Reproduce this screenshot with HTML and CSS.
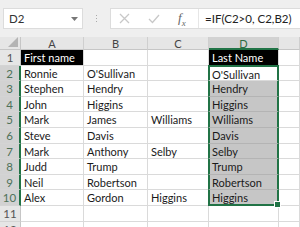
FILE: index.html
```html
<!DOCTYPE html>
<html lang="en">
<head>
    <meta charset="UTF-8">
    <title>Sheet</title>
    <link rel="stylesheet" href="styles.css">
</head>
<body>
    <div class="formula-bar">
        <div class="name-box">
            <span>D2</span>
            <svg class="caret" width="7" height="4" viewBox="0 0 7 4"><path d="M0 0h7L3.5 4z" fill="#777"/></svg>
        </div>
        <div class="grip"><i></i><i></i><i></i></div>
        <div class="fx-box">
            <div class="tools">
                <svg width="11" height="11" viewBox="0 0 11 11"><path d="M1 1l9 9M10 1l-9 9" stroke="#c8c8c8" stroke-width="1.3"/></svg>
                <svg width="12" height="11" viewBox="0 0 12 11"><path d="M1 6l3.5 3.5L11 2" stroke="#c8c8c8" stroke-width="1.3" fill="none"/></svg>
                <span class="fx">f<sub>x</sub></span>
            </div>
            <div class="formula">=IF(C2&gt;0, C2,B2)</div>
        </div>
    </div>

    <div class="sheet">
        <div class="corner"><svg width="10" height="10" viewBox="0 0 10 10"><path d="M10 0v10H0z" fill="#b4b4b4"/></svg></div>
        <div class="col-head">A</div>
        <div class="col-head">B</div>
        <div class="col-head">C</div>
        <div class="col-head sel">D</div>
        <div class="col-head"></div>

        <div class="row-head">1</div>
        <div class="cell title">First name</div>
        <div class="cell"></div>
        <div class="cell"></div>
        <div class="cell title">Last Name</div>
        <div class="cell"></div>

        <div class="row-head sel">2</div>
        <div class="cell">Ronnie</div>
        <div class="cell">O'Sullivan</div>
        <div class="cell"></div>
        <div class="cell pick active">O'Sullivan</div>
        <div class="cell"></div>

        <div class="row-head sel">3</div>
        <div class="cell">Stephen</div>
        <div class="cell">Hendry</div>
        <div class="cell"></div>
        <div class="cell pick">Hendry</div>
        <div class="cell"></div>

        <div class="row-head sel">4</div>
        <div class="cell">John</div>
        <div class="cell">Higgins</div>
        <div class="cell"></div>
        <div class="cell pick">Higgins</div>
        <div class="cell"></div>

        <div class="row-head sel">5</div>
        <div class="cell">Mark</div>
        <div class="cell">James</div>
        <div class="cell">Williams</div>
        <div class="cell pick">Williams</div>
        <div class="cell"></div>

        <div class="row-head sel">6</div>
        <div class="cell">Steve</div>
        <div class="cell">Davis</div>
        <div class="cell"></div>
        <div class="cell pick">Davis</div>
        <div class="cell"></div>

        <div class="row-head sel">7</div>
        <div class="cell">Mark</div>
        <div class="cell">Anthony</div>
        <div class="cell">Selby</div>
        <div class="cell pick">Selby</div>
        <div class="cell"></div>

        <div class="row-head sel">8</div>
        <div class="cell">Judd</div>
        <div class="cell">Trump</div>
        <div class="cell"></div>
        <div class="cell pick">Trump</div>
        <div class="cell"></div>

        <div class="row-head sel">9</div>
        <div class="cell">Neil</div>
        <div class="cell">Robertson</div>
        <div class="cell"></div>
        <div class="cell pick">Robertson</div>
        <div class="cell"></div>

        <div class="row-head sel">10</div>
        <div class="cell">Alex</div>
        <div class="cell">Gordon</div>
        <div class="cell">Higgins</div>
        <div class="cell pick last">Higgins<span class="handle"></span></div>
        <div class="cell"></div>

        <div class="row-head">11</div>
        <div class="cell"></div>
        <div class="cell"></div>
        <div class="cell"></div>
        <div class="cell"></div>
        <div class="cell"></div>

        <div class="row-head">12</div>
        <div class="cell"></div>
        <div class="cell"></div>
        <div class="cell"></div>
        <div class="cell"></div>
        <div class="cell"></div>
    </div>
</body>
</html>
```

FILE: styles.css
```css
body {
    margin: 0;
    background: #fff;
    font-family: Lato, "Liberation Sans", sans-serif;
    font-size: 11px;
    color: #1a1a1a;
    overflow: hidden;
}

.formula-bar {
    height: 37px;
    background: #efefef;
    display: flex;
    align-items: center;
    padding-left: 3px;
    box-sizing: border-box;
}

.name-box {
    width: 80px;
    height: 21px;
    box-sizing: border-box;
    background: #fff;
    border: 1px solid #dcdcdc;
    display: flex;
    align-items: center;
    justify-content: space-between;
    padding: 0 4px 0 5px;
    font-size: 11.5px;
    color: #333;
}

.grip {
    width: 27px;
    display: flex;
    flex-direction: column;
    align-items: center;
    gap: 2px;
}

.grip i {
    width: 1px;
    height: 1px;
    background: #aaa;
}

.fx-box {
    flex: 1;
    height: 21px;
    background: #fff;
    border-top: 1px solid #dcdcdc;
    border-bottom: 1px solid #dcdcdc;
    border-left: 1px solid #dcdcdc;
    box-sizing: border-box;
    display: flex;
    align-items: center;
}

.tools {
    width: 88px;
    display: flex;
    align-items: center;
    gap: 18px;
    padding-left: 8px;
    box-sizing: border-box;
    height: 100%;
    border-right: 1px solid #e6e6e6;
}

.fx {
    font-family: "Liberation Serif", serif;
    font-style: italic;
    font-size: 13px;
    color: #666;
}

.fx sub {
    font-size: 9px;
}

.formula {
    padding-left: 6px;
    font-size: 11.5px;
    color: #222;
}

.sheet {
    display: grid;
    grid-template-columns: 21px 63px 64px 61px 70px 1fr;
    grid-template-rows: 13px repeat(12, 15.6px);
}

.corner {
    background: #e6e6e6;
    border-right: 1px solid #c6c6c6;
    border-bottom: 1px solid #c6c6c6;
    display: flex;
    align-items: flex-end;
    justify-content: flex-end;
    padding: 0 2px 2px 0;
}

.col-head {
    background: #e6e6e6;
    border-right: 1px solid #cfcfcf;
    border-bottom: 1px solid #c6c6c6;
    text-align: center;
    line-height: 13px;
    color: #444;
}

.col-head.sel {
    background: #d2d2d2;
    color: #2e6b45;
    border-bottom: 2px solid #217346;
}

.row-head {
    background: #e6e6e6;
    border-right: 1px solid #c6c6c6;
    border-bottom: 1px solid #d4d4d4;
    text-align: center;
    line-height: 15px;
    font-size: 11.5px;
    color: #555;
}

.row-head.sel {
    background: #d2d2d2;
    color: #4e7158;
    border-right: 2px solid #217346;
}

.cell {
    border-right: 1px solid #dadada;
    border-bottom: 1px solid #dadada;
    padding-left: 3px;
    line-height: 15px;
    white-space: nowrap;
}

.cell.title {
    background: #000;
    color: #fff;
}

.pick {
    background: #c6c6c6;
    border-left: 2px solid #217346;
    border-right: 2px solid #217346;
    border-bottom: 1px solid #b4b4b4;
    margin-left: -1px;
    padding-left: 2px;
}

.pick.active {
    background: #fff;
    border-top: 2px solid #217346;
    margin-top: -1px;
    border-bottom: 1px solid #dadada;
}

.pick.last {
    border-bottom: 2px solid #217346;
    position: relative;
}

.handle {
    position: absolute;
    right: -4px;
    bottom: -4px;
    width: 5px;
    height: 5px;
    background: #217346;
    border: 1px solid #fff;
}
```
